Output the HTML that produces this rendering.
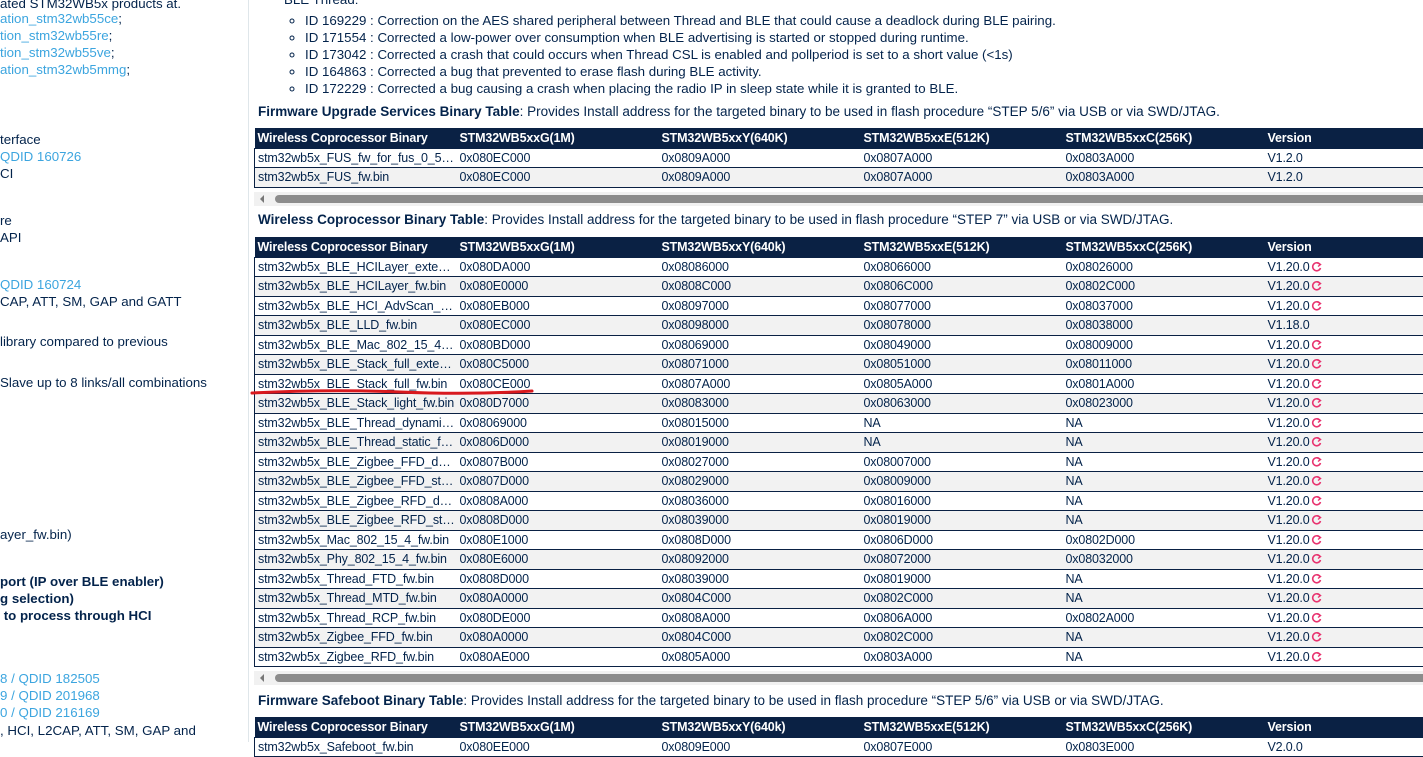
<!DOCTYPE html>
<html><head><meta charset="utf-8"><style>
body{margin:0;width:1423px;height:742px;overflow:hidden;background:#fff;font-family:"Liberation Sans",Arial,sans-serif;color:#03234b;position:relative}
.l{position:absolute;font-size:13.3px;white-space:nowrap;line-height:17px}
.a{color:#3ca5df}
.b{font-weight:bold}
.side{position:absolute;left:0;top:0;width:248px;height:742px;border-right:1px solid #dfe6ea;overflow:hidden}
ul{position:absolute;left:268px;top:12px;margin:0;padding:0 0 0 37px;font-size:13.3px;line-height:17px;list-style:circle;white-space:nowrap}
.t{position:absolute;left:258px;font-size:13.5px;white-space:nowrap}
table{position:absolute;left:254px;border-collapse:collapse;font-size:12.5px;table-layout:fixed;width:1240px}
td,th{padding:0 3px;height:18.5px;line-height:18.5px;white-space:nowrap;overflow:hidden;text-align:left;border-top:1px solid #0a2144;border-bottom:1px solid #0a2144;letter-spacing:-0.15px}
col{width:202px}
th{background:#0a2144;color:#fff;font-weight:bold}
td:first-child{border-left:1px solid #0a2144;text-overflow:ellipsis;padding-right:1px}
tr:nth-child(odd) td{background:#f2f2f2}
.sb{position:absolute;left:254px;width:1169px;height:14px;background:#f1f1f1}
.sb i{position:absolute;left:21px;top:3px;right:0;height:8px;background:#8c8c8c;border-radius:4px 0 0 4px}
.sb b{position:absolute;left:6px;top:3px;width:0;height:0;border-top:4px solid transparent;border-bottom:4px solid transparent;border-right:4px solid #777}
.r{display:inline-block;width:11px;height:11px;vertical-align:-1px;margin-left:1px}
</style></head><body>
<div class="side">
<div class="l" style="top:-5px;left:0">ated STM32WB5x products at.</div>
<div class="l a" style="top:10px;left:0">ation_stm32wb55ce<span style="color:#03234b">;</span></div>
<div class="l a" style="top:27px;left:0">tion_stm32wb55re<span style="color:#03234b">;</span></div>
<div class="l a" style="top:44px;left:0">tion_stm32wb55ve<span style="color:#03234b">;</span></div>
<div class="l a" style="top:61px;left:0">ation_stm32wb5mmg<span style="color:#03234b">;</span></div>
<div class="l" style="top:131px;left:0">terface</div>
<div class="l a" style="top:148px;left:0">QDID 160726</div>
<div class="l" style="top:165px;left:0">CI</div>
<div class="l" style="top:212px;left:0">re</div>
<div class="l" style="top:229px;left:0">API</div>
<div class="l a" style="top:276px;left:0">QDID 160724</div>
<div class="l" style="top:293px;left:0">CAP, ATT, SM, GAP and GATT</div>
<div class="l" style="top:333px;left:0">library compared to previous</div>
<div class="l" style="top:374px;left:0">Slave up to 8 links/all combinations</div>
<div class="l" style="top:526px;left:0">ayer_fw.bin)</div>
<div class="l b" style="top:573px;left:0">port (IP over BLE enabler)</div>
<div class="l b" style="top:590px;left:0">g selection)</div>
<div class="l b" style="top:607px;left:0">&nbsp;to process through HCI</div>
<div class="l a" style="top:670px;left:0">8 / QDID 182505</div>
<div class="l a" style="top:687px;left:0">9 / QDID 201968</div>
<div class="l a" style="top:704px;left:0">0 / QDID 216169</div>
<div class="l" style="top:722px;left:0">, HCI, L2CAP, ATT, SM, GAP and</div>
</div>
<div class="l" style="top:-9px;left:284px">BLE Thread:</div>
<ul>
<li>ID 169229 : Correction on the AES shared peripheral between Thread and BLE that could cause a deadlock during BLE pairing.</li>
<li>ID 171554 : Corrected a low-power over consumption when BLE advertising is started or stopped during runtime.</li>
<li>ID 173042 : Corrected a crash that could occurs when Thread CSL is enabled and pollperiod is set to a short value (&lt;1s)</li>
<li>ID 164863 : Corrected a bug that prevented to erase flash during BLE activity.</li>
<li>ID 172229 : Corrected a bug causing a crash when placing the radio IP in sleep state while it is granted to BLE.</li>
</ul>
<div class="t" style="top:104px"><b>Firmware Upgrade Services Binary Table</b>: Provides Install address for the targeted binary to be used in flash procedure “STEP 5/6” via USB or via SWD/JTAG.</div>
<table style="top:128px"><colgroup><col><col><col><col><col><col style="width:230px"></colgroup>
<tr><th>Wireless Coprocessor Binary</th><th>STM32WB5xxG(1M)</th><th>STM32WB5xxY(640K)</th><th>STM32WB5xxE(512K)</th><th>STM32WB5xxC(256K)</th><th>Version</th></tr>
<tr><td>stm32wb5x_FUS_fw_for_fus_0_5_3.bin</td><td>0x080EC000</td><td>0x0809A000</td><td>0x0807A000</td><td>0x0803A000</td><td>V1.2.0</td></tr>
<tr><td>stm32wb5x_FUS_fw.bin</td><td>0x080EC000</td><td>0x0809A000</td><td>0x0807A000</td><td>0x0803A000</td><td>V1.2.0</td></tr>
</table>
<div class="sb" style="top:192px"><b></b><i></i></div>
<div class="t" style="top:212px"><b>Wireless Coprocessor Binary Table</b>: Provides Install address for the targeted binary to be used in flash procedure “STEP 7” via USB or via SWD/JTAG.</div>
<svg width="0" height="0" style="position:absolute"><defs><g id="r"><path d="M9 3.5A4 4 0 1 0 9.5 7" fill="none" stroke="#e8336f" stroke-width="1.6"/><path d="M6.5 1.5L9.5 3.5 7 5.5" fill="none" stroke="#e8336f" stroke-width="1.4"/></g></defs></svg>
<table style="top:237px"><colgroup><col><col><col><col><col><col style="width:230px"></colgroup>
<tr><th>Wireless Coprocessor Binary</th><th>STM32WB5xxG(1M)</th><th>STM32WB5xxY(640k)</th><th>STM32WB5xxE(512K)</th><th>STM32WB5xxC(256K)</th><th>Version</th></tr>
<tr><td>stm32wb5x_BLE_HCILayer_extended_fw.bin</td><td>0x080DA000</td><td>0x08086000</td><td>0x08066000</td><td>0x08026000</td><td>V1.20.0<svg class="r"><use href="#r"/></svg></td></tr>
<tr><td>stm32wb5x_BLE_HCILayer_fw.bin</td><td>0x080E0000</td><td>0x0808C000</td><td>0x0806C000</td><td>0x0802C000</td><td>V1.20.0<svg class="r"><use href="#r"/></svg></td></tr>
<tr><td>stm32wb5x_BLE_HCI_AdvScan_fw.bin</td><td>0x080EB000</td><td>0x08097000</td><td>0x08077000</td><td>0x08037000</td><td>V1.20.0<svg class="r"><use href="#r"/></svg></td></tr>
<tr><td>stm32wb5x_BLE_LLD_fw.bin</td><td>0x080EC000</td><td>0x08098000</td><td>0x08078000</td><td>0x08038000</td><td>V1.18.0</td></tr>
<tr><td>stm32wb5x_BLE_Mac_802_15_4_fw.bin</td><td>0x080BD000</td><td>0x08069000</td><td>0x08049000</td><td>0x08009000</td><td>V1.20.0<svg class="r"><use href="#r"/></svg></td></tr>
<tr><td>stm32wb5x_BLE_Stack_full_extended_fw.bin</td><td>0x080C5000</td><td>0x08071000</td><td>0x08051000</td><td>0x08011000</td><td>V1.20.0<svg class="r"><use href="#r"/></svg></td></tr>
<tr><td>stm32wb5x_BLE_Stack_full_fw.bin</td><td>0x080CE000</td><td>0x0807A000</td><td>0x0805A000</td><td>0x0801A000</td><td>V1.20.0<svg class="r"><use href="#r"/></svg></td></tr>
<tr><td>stm32wb5x_BLE_Stack_light_fw.bin</td><td>0x080D7000</td><td>0x08083000</td><td>0x08063000</td><td>0x08023000</td><td>V1.20.0<svg class="r"><use href="#r"/></svg></td></tr>
<tr><td>stm32wb5x_BLE_Thread_dynamic_fw.bin</td><td>0x08069000</td><td>0x08015000</td><td>NA</td><td>NA</td><td>V1.20.0<svg class="r"><use href="#r"/></svg></td></tr>
<tr><td>stm32wb5x_BLE_Thread_static_fw.bin</td><td>0x0806D000</td><td>0x08019000</td><td>NA</td><td>NA</td><td>V1.20.0<svg class="r"><use href="#r"/></svg></td></tr>
<tr><td>stm32wb5x_BLE_Zigbee_FFD_dynamic_fw.bin</td><td>0x0807B000</td><td>0x08027000</td><td>0x08007000</td><td>NA</td><td>V1.20.0<svg class="r"><use href="#r"/></svg></td></tr>
<tr><td>stm32wb5x_BLE_Zigbee_FFD_static_fw.bin</td><td>0x0807D000</td><td>0x08029000</td><td>0x08009000</td><td>NA</td><td>V1.20.0<svg class="r"><use href="#r"/></svg></td></tr>
<tr><td>stm32wb5x_BLE_Zigbee_RFD_dynamic_fw.bin</td><td>0x0808A000</td><td>0x08036000</td><td>0x08016000</td><td>NA</td><td>V1.20.0<svg class="r"><use href="#r"/></svg></td></tr>
<tr><td>stm32wb5x_BLE_Zigbee_RFD_static_fw.bin</td><td>0x0808D000</td><td>0x08039000</td><td>0x08019000</td><td>NA</td><td>V1.20.0<svg class="r"><use href="#r"/></svg></td></tr>
<tr><td>stm32wb5x_Mac_802_15_4_fw.bin</td><td>0x080E1000</td><td>0x0808D000</td><td>0x0806D000</td><td>0x0802D000</td><td>V1.20.0<svg class="r"><use href="#r"/></svg></td></tr>
<tr><td>stm32wb5x_Phy_802_15_4_fw.bin</td><td>0x080E6000</td><td>0x08092000</td><td>0x08072000</td><td>0x08032000</td><td>V1.20.0<svg class="r"><use href="#r"/></svg></td></tr>
<tr><td>stm32wb5x_Thread_FTD_fw.bin</td><td>0x0808D000</td><td>0x08039000</td><td>0x08019000</td><td>NA</td><td>V1.20.0<svg class="r"><use href="#r"/></svg></td></tr>
<tr><td>stm32wb5x_Thread_MTD_fw.bin</td><td>0x080A0000</td><td>0x0804C000</td><td>0x0802C000</td><td>NA</td><td>V1.20.0<svg class="r"><use href="#r"/></svg></td></tr>
<tr><td>stm32wb5x_Thread_RCP_fw.bin</td><td>0x080DE000</td><td>0x0808A000</td><td>0x0806A000</td><td>0x0802A000</td><td>V1.20.0<svg class="r"><use href="#r"/></svg></td></tr>
<tr><td>stm32wb5x_Zigbee_FFD_fw.bin</td><td>0x080A0000</td><td>0x0804C000</td><td>0x0802C000</td><td>NA</td><td>V1.20.0<svg class="r"><use href="#r"/></svg></td></tr>
<tr><td>stm32wb5x_Zigbee_RFD_fw.bin</td><td>0x080AE000</td><td>0x0805A000</td><td>0x0803A000</td><td>NA</td><td>V1.20.0<svg class="r"><use href="#r"/></svg></td></tr>
</table>
<svg style="position:absolute;left:250px;top:386px" width="285" height="12"><path d="M2 7 Q80 3 150 6 T282 5" fill="none" stroke="#d8191e" stroke-width="3" stroke-linecap="round"/></svg>
<div class="sb" style="top:671px"><b></b><i></i></div>
<div class="t" style="top:693px"><b>Firmware Safeboot Binary Table</b>: Provides Install address for the targeted binary to be used in flash procedure “STEP 5/6” via USB or via SWD/JTAG.</div>
<table style="top:717px"><colgroup><col><col><col><col><col><col style="width:230px"></colgroup>
<tr><th>Wireless Coprocessor Binary</th><th>STM32WB5xxG(1M)</th><th>STM32WB5xxY(640k)</th><th>STM32WB5xxE(512K)</th><th>STM32WB5xxC(256K)</th><th>Version</th></tr>
<tr><td>stm32wb5x_Safeboot_fw.bin</td><td>0x080EE000</td><td>0x0809E000</td><td>0x0807E000</td><td>0x0803E000</td><td>V2.0.0</td></tr>
</table>
</body></html>
